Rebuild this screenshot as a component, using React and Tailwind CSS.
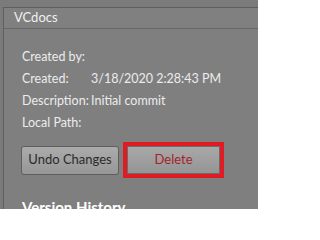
export default function App() {
  const rows = [
    ["Created by:", ""],
    ["Created:", "3/18/2020 2:28:43 PM"],
    ["Description:", "Initial commit"],
    ["Local Path:", ""],
  ];

  return (
    <div
      className="w-[258px] h-[209px] overflow-hidden bg-[#7b7b7b] pt-[7px] pl-[3px]"
      style={{ fontFamily: 'Lato, "Noto Sans", sans-serif' }}
    >
      <div className="h-[202px] bg-[#7f7f7f] border-l border-t border-[#5f5f5f]">
        <div className="h-[21px] border-b border-[#686868] pl-[10px] flex items-center text-[13px] text-[#f0f0f0] bg-[#808080]">
          VCdocs
        </div>
        <div className="pl-[18px] pt-[17px] text-[12.5px] text-[#ececec]">
          {rows.map(([label, value]) => (
            <div key={label} className="flex h-[22px] items-center whitespace-nowrap">
              <span className="w-[69px] shrink-0">{label}</span>
              <span>{value}</span>
            </div>
          ))}
          <div className="flex mt-[8px] gap-[4px] items-center">
            <button className="w-[98px] h-[29px] ml-[-1px] rounded-[3px] border border-[#5e5e5e] bg-gradient-to-b from-[#ababab] to-[#979797] text-[13px] text-[#2a2a2a]">
              Undo Changes
            </button>
            <div className="border-[4px] border-[#e01b24]">
              <button className="w-[93px] h-[28px] bg-gradient-to-b from-[#a8a8a8] to-[#959595] border border-[#6a6a6a] text-[13px] text-[#a3232a]">
                Delete
              </button>
            </div>
          </div>
          <div className="mt-[18px] text-[15px] font-bold text-white whitespace-nowrap">Version History</div>
        </div>
      </div>
    </div>
  );
}
